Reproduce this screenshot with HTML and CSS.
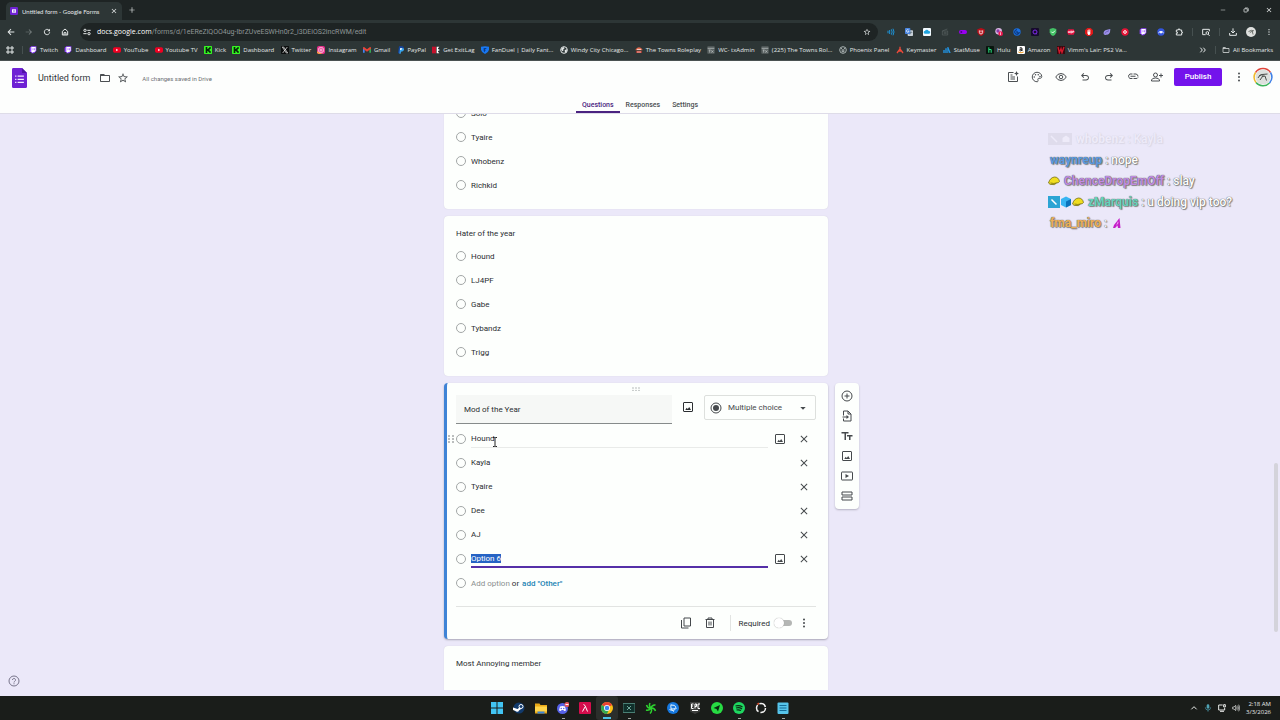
FILE: index.html
```html
<!DOCTYPE html>
<html lang="en">
<head>
  <meta charset="UTF-8" />
  <meta name="viewport" content="width=device-width, initial-scale=1.0"/>
  <title>Untitled form - Google Forms</title>
  <link rel="stylesheet" href="styles.css">
</head>
<body>
  <!-- shared icons -->
  <svg class="defs" width="0" height="0">
    <symbol id="i-image" viewBox="0 0 24 24"><path fill="none" stroke="currentColor" stroke-width="2" d="M4 3h16q1 0 1 1v16q0 1-1 1H4q-1 0-1-1V4q0-1 1-1z"/><path d="M14.500 12l-3 4-2-2.500L6.500 18h11.500z"/></symbol>
    <symbol id="i-close" viewBox="0 0 24 24"><path d="M19 6.400L17.600 5 12 10.600 6.400 5 5 6.400 10.600 12 5 17.600 6.400 19 12 13.400 17.600 19 19 17.600 13.400 12z"/></symbol>
    <symbol id="i-dots" viewBox="0 0 24 24"><circle cx="12" cy="5" r="2"/><circle cx="12" cy="12" r="2"/><circle cx="12" cy="19" r="2"/></symbol>
    <symbol id="i-star" viewBox="0 0 24 24"><path d="M22 9.200l-7.200-.6L12 2 9.200 8.600 2 9.200l5.500 4.700L5.800 21 12 17.300 18.200 21l-1.600-7.100L22 9.200zM12 15.400l-3.800 2.300 1-4.300-3.300-2.900 4.400-.4L12 6.100l1.700 4 4.400.4-3.300 2.900 1 4.300z"/></symbol>
    <symbol id="i-folder" viewBox="0 0 24 24"><path d="M20 6h-8l-2-2H4c-1.100 0-2 .9-2 2v12c0 1.100.9 2 2 2h16c1.100 0 2-.9 2-2V8c0-1.100-.9-2-2-2zm0 12H4V8h16v10z"/></symbol>
    <symbol id="i-undo" viewBox="0 0 24 24"><path d="M7 19v-2h7.100c1.900 0 3.900-1.500 3.900-3.500S16 10 14.100 10H7.800l2.600 2.600L9 14 4 9l5-5 1.400 1.400L7.800 8h6.300c3.200 0 5.900 2.300 5.900 5.500S17.300 19 14.100 19z"/></symbol>
    <symbol id="i-twitch" viewBox="0 0 24 24"><path fill="#9146ff" d="M2 5l5-4h15v14l-7 7H7v-4H2z"/><path fill="#fff" d="M7 3h13v11l-4 4h-4l-3 3v-3H7z"/><path fill="#9146ff" d="M11 7h2v6h-2zM16 7h2v6h-2z"/></symbol>
    <symbol id="i-youtube" viewBox="0 0 24 24"><rect x="0" y="4" width="24" height="16" rx="5" fill="#f00022"/><path fill="#fff" d="M9.500 8.500v7l6-3.500z"/></symbol>
    <symbol id="i-kick" viewBox="0 0 24 24"><rect width="24" height="24" rx="2" fill="#35f522"/><path fill="#07220a" d="M5 3h5v6h3V6h3V3h4v6h-3v6h3v6h-4v-3h-3v-3h-3v6H5z"/></symbol>
    <symbol id="i-tx" viewBox="0 0 24 24"><rect x="1" y="1" width="22" height="22" rx="2" fill="#5a6262"/><path fill="none" stroke="#c3c9c9" stroke-width="2" d="M2 7h20M5 12h6M8 12v8M13 13l6 7M19 13l-6 7"/></symbol>
    <symbol id="i-banana" viewBox="0 0 24 24"><path fill="#f0dd20" stroke="#6b6512" stroke-width="1.500" d="M1 16Q4 5 13 4q8 0 10 9-2 3-6 3-4 5-9 3-4 1-7-3z"/><path fill="none" stroke="#6b6512" stroke-width="1.500" d="M5 16q7 2 12 0"/></symbol>
    <symbol id="i-forms" viewBox="0 0 24 32"><path fill="#6f22d4" d="M2 0h14l8 8v22c0 1-1 2-2 2H2c-1 0-2-1-2-2V2C0 1 1 0 2 0z"/><path fill="#4e12a5" d="M16 0l8 8h-8z"/><path fill="#f3eaff" d="M9 12h10v2H9zM9 17h10v2H9zM9 22h10v2H9zM5 12h2v2H5zM5 17h2v2H5zM5 22h2v2H5z"/></symbol>
  </svg>

  <!-- browser window -->
  <header class="browser">
    <div class="tab-strip">
      <div class="tab">
        <svg class="ico" viewBox="0 0 24 24"><rect width="24" height="24" rx="4" fill="#6f22d4"/><path fill="#fff" d="M6 7h12v10H6z"/><path fill="#a880e6" d="M9 9h7v2H9zM9 13h7v2H9z"/></svg>
        <span class="tab-title">Untitled form - Google Forms</span>
        <button class="icon-btn tab-close" aria-label="Close tab"><svg class="ico"><use href="#i-close"/></svg></button>
      </div>
      <button class="icon-btn new-tab" aria-label="New tab"><svg class="ico" viewBox="0 0 24 24"><path d="M20 13h-7v7h-2v-7H4v-2h7V4h2v7h7z"/></svg></button>
      <div class="window-btns">
        <button class="icon-btn" aria-label="Minimize"><svg class="ico-s" viewBox="0 0 24 24"><path d="M3 11h18v2H3z"/></svg></button>
        <button class="icon-btn" aria-label="Restore"><svg class="ico-s" viewBox="0 0 24 24"><path fill="none" stroke="currentColor" stroke-width="3" d="M4 9a2 2 0 0 1 2-2h9a2 2 0 0 1 2 2v9a2 2 0 0 1-2 2H6a2 2 0 0 1-2-2zM8 4h10a3 3 0 0 1 3 3v10"/></svg></button>
        <button class="icon-btn" aria-label="Close"><svg class="ico" viewBox="0 0 24 24"><use href="#i-close"/></svg></button>
      </div>
    </div>

    <div class="toolbar">
      <button class="icon-btn" aria-label="Back"><svg class="ico" viewBox="0 0 24 24"><path d="M22 10.500H7l6-6L11 2.500 1.500 12l9.500 9.500 2-2-6-6h15z"/></svg></button>
      <button class="icon-btn dim" aria-label="Forward"><svg class="ico" viewBox="0 0 24 24"><path d="M2 11h15l-6-6 1.500-1.500L21 12l-8.500 8.500L11 19l6-6H2z"/></svg></button>
      <button class="icon-btn" aria-label="Reload"><svg class="ico" viewBox="0 0 24 24"><path fill="none" stroke="currentColor" stroke-width="3" d="M20 13a8 8 0 1 1-2.500-6.800"/><path d="M21 2v8h-8z"/></svg></button>
      <button class="icon-btn" aria-label="Home"><svg class="ico" viewBox="0 0 24 24"><path fill="none" stroke="currentColor" stroke-width="3" d="M4 10l8-7 8 7v11H4zM9 21v-7h6v7"/></svg></button>
      <div class="address">
        <svg class="ico" viewBox="0 0 24 24"><path fill="none" stroke="currentColor" stroke-width="3" d="M13 7h10M1 17h10"/><circle cx="6" cy="7" r="3.500" fill="none" stroke="currentColor" stroke-width="3"/><circle cx="18" cy="17" r="3.500" fill="none" stroke="currentColor" stroke-width="3"/></svg>
        <label class="domain" for="url">docs.google.com</label>
        <input class="url" id="url" type="text" value="/forms/d/1eEReZlQOO4ug-IbrZUveESWHn0r2_i3DEiOS2incRWM/edit" />
        <button class="icon-btn" aria-label="Bookmark this tab"><svg class="ico"><use href="#i-star"/></svg></button>
      </div>
      <div class="extensions">
        <svg class="ico" viewBox="0 0 24 24"><g fill="none" stroke="#1c93d8" stroke-width="3"><path d="M3 8v8M8 6v12M13 4q5 8 0 16M18 2q6 10 0 20"/></g></svg>
        <svg class="ico" viewBox="0 0 24 24"><rect x="8" y="7" width="16" height="17" rx="2" fill="#c9d2da"/><rect width="16" height="18" rx="2" fill="#4a86e0"/><path fill="none" stroke="#fff" stroke-width="2" d="M11 6a4 4 0 1 0 1 4H8"/><path fill="none" stroke="#5b6c7a" stroke-width="2" d="M15 13h7M18 11q0 6-4 9"/></svg>
        <svg class="ico" viewBox="0 0 24 24"><rect width="24" height="24" rx="3" fill="#f4fbff"/><path fill="#20a4df" d="M6 17a4 4 0 0 1 0-8 6 6 0 0 1 11 0 4 4 0 0 1 1 8z"/></svg>
        <svg class="ico" viewBox="0 0 24 24"><path fill="none" stroke="#596262" stroke-width="2" d="M4 9h16v12H4zM4 9l15-6M8 13h9M8 17h9"/></svg>
        <svg class="ico" viewBox="0 0 24 24"><rect y="6" width="24" height="12" rx="6" fill="#9a00f0"/><circle cx="7" cy="12" r="3" fill="#4d0087"/></svg>
        <svg class="ico" viewBox="0 0 24 24"><path fill="#b80d18" d="M12 0l11 4v9q-2 8-11 11Q3 21 1 13V4z"/><path fill="none" stroke="#fff" stroke-width="2.500" d="M7 7v6a4 4 0 0 0 10 0V7M12 7v6"/></svg>
        <svg class="ico" viewBox="0 0 24 24"><circle cx="11" cy="10" r="10" fill="#d8b7e2"/><circle cx="9" cy="9" r="5" fill="#8a3da7"/><circle cx="17" cy="17" r="7" fill="#ef174f"/><path fill="#fff" d="M16 13h2v8h-2z"/></svg>
        <svg class="ico" viewBox="0 0 24 24"><circle cx="12" cy="12" r="11" fill="#1a6fe0"/><path fill="none" stroke="#0b2f6b" stroke-width="3" d="M12 5a7 7 0 1 0 7 7M12 9v6h5"/></svg>
        <svg class="ico" viewBox="0 0 24 24"><rect width="24" height="24" rx="3" fill="#160b2b"/><circle cx="12" cy="12" r="6" fill="none" stroke="#7e2be8" stroke-width="3"/><path fill="#7e2be8" d="M14 14l5 5h-4z"/></svg>
        <svg class="ico" viewBox="0 0 24 24"><path fill="#44c267" d="M12 0l10 3v10q-2 8-10 11Q4 21 2 13V3z"/><path fill="none" stroke="#e7ffed" stroke-width="3" d="M7 11l4 4 7-7"/></svg>
        <svg class="ico" viewBox="0 0 24 24"><path fill="#e5103f" d="M4 4h16l4 8-4 8H4l-4-8z"/><path fill="none" stroke="#fff" stroke-width="2" d="M4 15l2-6 2 6M11 9v6M11 9h3v6h-3M17 15V9h3v3h-3"/></svg>
        <svg class="ico" viewBox="0 0 24 24"><path fill="#e01818" d="M7 0h10l7 7v10l-7 7H7l-7-7V7z"/><path fill="#fff" d="M8 6h2v5h1V4h2v7h1V5h2v13l-3 3h-3l-3-5z"/></svg>
        <svg class="ico" viewBox="0 0 24 24"><path fill="#9b8fe8" d="M2 18Q0 7 12 5l10-2-1 10q-3 9-11 7-5 3-8-2z"/><path fill="none" stroke="#55499e" stroke-width="2" d="M5 17q5-7 13-9"/></svg>
        <svg class="ico" viewBox="0 0 24 24"><circle cx="12" cy="12" r="11" fill="#e71336"/><circle cx="12" cy="12" r="4" fill="none" stroke="#fff" stroke-width="3"/></svg>
        <svg class="ico"><use href="#i-twitch"/></svg>
        <svg class="ico" viewBox="0 0 24 24"><circle cx="12" cy="12" r="11" fill="#3355df"/><path fill="#fff" d="M4 17a8 8 0 0 1 16 0l-4-4-4 4-4-4z"/></svg>
        <svg class="ico" viewBox="0 0 24 24"><path fill="none" stroke="currentColor" stroke-width="3" d="M4 6h6V3h4v3h6v6h2v3h-2v6H4v-5h3v-4H4z"/></svg>
      </div>
      <span class="sep"></span>
      <button class="icon-btn" aria-label="Search tabs"><svg class="ico" viewBox="0 0 24 24"><path fill="none" stroke="currentColor" stroke-width="3" d="M11 20H2V4h20v6M18 19l5 4"/><circle cx="16" cy="15" r="4" fill="none" stroke="currentColor" stroke-width="3"/></svg></button>
      <span class="sep"></span>
      <button class="icon-btn" aria-label="Downloads"><svg class="ico" viewBox="0 0 24 24"><path fill="none" stroke="currentColor" stroke-width="3" d="M12 1v14M6 9l6 6 6-6M2 15v7h20v-7"/></svg></button>
      <button class="icon-btn" aria-label="Profile"><svg class="ico-l" viewBox="0 0 24 24"><circle cx="12" cy="12" r="12" fill="#dfe1df"/><path fill="none" stroke="#565a56" stroke-width="2" d="M6 11q7-5 13-2M9 14q3-4 7-3M15 10l2 8"/></svg></button>
      <button class="icon-btn" aria-label="Menu"><svg class="ico"><use href="#i-dots"/></svg></button>
    </div>

    <nav class="bookmarks">
      <svg class="ico" viewBox="0 0 24 24"><path fill="none" stroke="currentColor" stroke-width="3" d="M3 3h6v6H3zM15 3h6v6h-6zM3 15h6v6H3zM15 15h6v6h-6z"/></svg>
      <span class="sep"></span>
      <div class="bookmark-list">
        <a href="#"><svg class="ico"><use href="#i-twitch"/></svg>Twitch</a>
        <a href="#"><svg class="ico"><use href="#i-twitch"/></svg>Dashboard</a>
        <a href="#"><svg class="ico"><use href="#i-youtube"/></svg>YouTube</a>
        <a href="#"><svg class="ico"><use href="#i-youtube"/></svg>Youtube TV</a>
        <a href="#"><svg class="ico"><use href="#i-kick"/></svg>Kick</a>
        <a href="#"><svg class="ico"><use href="#i-kick"/></svg>Dashboard</a>
        <a href="#"><svg class="ico" viewBox="0 0 24 24"><rect width="24" height="24" rx="2" fill="#0b0d0d"/><path fill="none" stroke="#fff" stroke-width="2" d="M4 3h4l12 18h-4zM19 3L5 21"/></svg>Twitter</a>
        <a href="#"><svg class="ico" viewBox="0 0 24 24"><rect width="24" height="24" rx="6" fill="#e8308b"/><path fill="#f9a13c" d="M0 16v3q1 5 6 5h10z"/><rect x="5" y="5" width="14" height="14" rx="4" fill="none" stroke="#fff" stroke-width="2"/><circle cx="12" cy="12" r="3" fill="none" stroke="#fff" stroke-width="2"/></svg>Instagram</a>
        <a href="#"><svg class="ico" viewBox="0 0 24 24"><path fill="#4285f4" d="M0 5h5v15H0z"/><path fill="#34a853" d="M19 5h5v15h-5z"/><path fill="#ea4335" d="M0 4h4l8 6 8-6h4v4l-12 9L0 8z"/></svg>Gmail</a>
        <a href="#"><svg class="ico" viewBox="0 0 24 24"><path fill="#1546a0" d="M6 1h9q7 1 5 8-2 6-10 6l-2 7H3z"/><path fill="#38a5ee" d="M9 7h10q3 1 2 5-2 5-9 5l-1 6H7z"/><path fill="#fff" d="M9 7h7q0 5-7 5z"/></svg>PayPal</a>
        <a href="#"><svg class="ico" viewBox="0 0 24 24"><path fill="#c4122c" d="M0 2h12v20H0z"/><path fill="#fff" d="M14 2h8l-4 5v3h4v4h-4v3l4 5h-8z"/></svg>Get ExitLag</a>
        <a href="#"><svg class="ico" viewBox="0 0 24 24"><path fill="#1878f2" d="M0 2q12-3 24 0v9q-2 9-12 13Q2 20 0 11z"/><path fill="#0a3b8a" d="M8 6h9l-2 3h-3v2h3l-2 3h-1v5l-4-4z"/></svg>FanDuel | Daily Fant...</a>
        <a href="#"><svg class="ico" viewBox="0 0 24 24"><circle cx="12" cy="12" r="10" fill="none" stroke="#e2e6e6" stroke-width="3"/><path fill="#e2e6e6" d="M3 9l7-6 4 4-4 3v4l-3 2zM14 12l7-2-1 7-5 4z"/></svg>Windy City Chicago...</a>
        <a href="#"><svg class="ico" viewBox="0 0 24 24"><path fill="#e06a4e" d="M2 10Q12-3 22 10v3H2z"/><path fill="#fff" d="M6 9h12v2H6z"/><path fill="#c83e34" d="M4 15h16v6H4z"/><path fill="#efe3dc" d="M8 15h2v6H8zM14 15h2v6h-2z"/></svg>The Towns Roleplay</a>
        <a href="#"><svg class="ico"><use href="#i-tx"/></svg>WC- txAdmin</a>
        <a href="#"><svg class="ico"><use href="#i-tx"/></svg>(225) The Towns Rol...</a>
        <a href="#"><svg class="ico" viewBox="0 0 24 24"><circle cx="12" cy="12" r="10" fill="none" stroke="#aab2b2" stroke-width="3"/><path fill="none" stroke="#aab2b2" stroke-width="3" d="M6 6l4 5-1 6h6l-1-6 4-5"/></svg>Phoenix Panel</a>
        <a href="#"><svg class="ico" viewBox="0 0 24 24"><path fill="none" stroke="#ea4a3a" stroke-width="4" d="M12 2v7L3 21M12 9l9 12M7 15h10"/></svg>Keymaster</a>
        <a href="#"><svg class="ico" viewBox="0 0 24 24"><path fill="#2196e8" d="M1 12h4v9H1zM7 7h4v14H7zM13 3h3l7 18h-4l-3-8v8h-3z"/></svg>StatMuse</a>
        <a href="#"><svg class="ico" viewBox="0 0 24 24"><rect width="24" height="24" rx="2" fill="#08150e"/><path fill="#28e57f" d="M7 4h3v5h5l2 2v9h-3v-8h-4v8H7z"/></svg>Hulu</a>
        <a href="#"><svg class="ico" viewBox="0 0 24 24"><rect width="24" height="24" rx="3" fill="#fff"/><path fill="none" stroke="#111" stroke-width="3" d="M8 6q7-3 7 2v7M15 9q-8 0-7 4 3 4 7-1"/><path fill="none" stroke="#f29a1c" stroke-width="3" d="M4 18q8 5 16 0"/></svg>Amazon</a>
        <a href="#"><svg class="ico" viewBox="0 0 24 24"><rect width="24" height="24" fill="#370a10"/><path fill="none" stroke="#d11a2c" stroke-width="4" d="M3 3l4 17 5-12 3 12 6-17"/></svg>Vimm's Lair: PS2 Va...</a>
      </div>
      <button class="icon-btn more" aria-label="More bookmarks"><svg class="ico" viewBox="0 0 24 24"><path fill="none" stroke="currentColor" stroke-width="3" d="M4 5l6 7-6 7M13 5l6 7-6 7"/></svg></button>
      <span class="sep"></span>
      <a class="all-bookmarks" href="#"><svg class="ico"><use href="#i-folder"/></svg>All Bookmarks</a>
    </nav>
  </header>

  <!-- form editor header -->
  <header class="form-header">
    <div class="form-bar">
      <svg class="forms-logo"><use href="#i-forms"/></svg>
      <h1 class="form-name">Untitled form</h1>
      <button class="icon-btn" aria-label="Move to folder"><svg class="ico-m"><use href="#i-folder"/></svg></button>
      <button class="icon-btn" aria-label="Star"><svg class="ico-m"><use href="#i-star"/></svg></button>
      <span class="saved">All changes saved in Drive</span>
      <div class="form-actions">
        <button class="icon-btn" aria-label="Add-ons"><svg class="ico-m" viewBox="0 0 24 24"><path fill="none" stroke="currentColor" stroke-width="2" d="M13 3H3v18h18V11M7 8h4M7 12h9M7 16h9"/><path d="M19 0l1.500 3.500L24 5l-3.500 1.500L19 10l-1.500-3.500L14 5l3.500-1.500z"/></svg></button>
        <button class="icon-btn" aria-label="Customize theme"><svg class="ico-m" viewBox="0 0 24 24"><path fill="none" stroke="currentColor" stroke-width="2" d="M12 2.500a9.500 9.500 0 0 0 0 19c2 0 2.500-1.500 2-3-.8-2 0-4 2-4h2.500c2 0 3-1.500 3-3.500 0-5-4.500-8.500-9.500-8.500z"/><circle cx="6.500" cy="12" r="1.500"/><circle cx="9" cy="7.500" r="1.500"/><circle cx="14.500" cy="7.500" r="1.500"/><circle cx="18" cy="11" r="1.500"/></svg></button>
        <button class="icon-btn" aria-label="Preview"><svg class="ico-m" viewBox="0 0 24 24"><path fill="none" stroke="currentColor" stroke-width="2" d="M1.500 12Q5 5 12 5t10.500 7Q19 19 12 19T1.500 12z"/><circle cx="12" cy="12" r="3.500" fill="none" stroke="currentColor" stroke-width="2"/></svg></button>
        <button class="icon-btn" aria-label="Undo"><svg class="ico-m"><use href="#i-undo"/></svg></button>
        <button class="icon-btn flip" aria-label="Redo"><svg class="ico-m"><use href="#i-undo"/></svg></button>
        <button class="icon-btn" aria-label="Copy responder link"><svg class="ico-m" viewBox="0 0 24 24"><path fill="none" stroke="currentColor" stroke-width="2" d="M11 15H6a5 5 0 0 1 0-9h5M13 6h5a5 5 0 0 1 4 5M7 10.500h10M13 15h5q3 0 4-2"/></svg></button>
        <button class="icon-btn" aria-label="Share"><svg class="ico-m" viewBox="0 0 24 24"><circle cx="9" cy="8" r="4" fill="none" stroke="currentColor" stroke-width="2"/><path fill="none" stroke="currentColor" stroke-width="2" d="M1 20v-2q1-4 8-4t8 4v2zM20 5v8M16 9h8"/></svg></button>
        <button class="publish">Publish</button>
        <button class="icon-btn" aria-label="More"><svg class="ico-m"><use href="#i-dots"/></svg></button>
        <button class="icon-btn" aria-label="Account"><svg class="avatar" viewBox="0 0 40 40"><g fill="none" stroke-width="3"><path stroke="#e0453a" d="M5 11A18 18 0 0 1 35 11"/><path stroke="#3e7fe6" d="M35 11A18 18 0 0 1 33 32"/><path stroke="#3bb45a" d="M33 32A18 18 0 0 1 6 31"/><path stroke="#f0b92a" d="M6 31A18 18 0 0 1 5 11"/></g><circle cx="20" cy="20" r="15" fill="#dde0dd"/><path fill="none" stroke="#4a4d4a" stroke-width="2" d="M10 22q3-7 8-7l11-1M14 26l5-7 5-1 3 9M12 18l6-3M21 15l-3 5"/></svg></button>
      </div>
    </div>
    <nav class="form-tabs">
      <a class="form-tab active" href="#">Questions</a>
      <a class="form-tab" href="#">Responses</a>
      <a class="form-tab" href="#">Settings</a>
    </nav>
  </header>

  <main class="editor">
    <div class="questions">
      <section class="card first">
        <label class="option"><input type="radio" name="q1" />Solo</label>
        <label class="option"><input type="radio" name="q1" />Tyaire</label>
        <label class="option"><input type="radio" name="q1" />Whobenz</label>
        <label class="option"><input type="radio" name="q1" />Richkid</label>
      </section>

      <section class="card">
        <h2 class="question">Hater of the year</h2>
        <label class="option"><input type="radio" name="q2" />Hound</label>
        <label class="option"><input type="radio" name="q2" />LJ4PF</label>
        <label class="option"><input type="radio" name="q2" />Gabe</label>
        <label class="option"><input type="radio" name="q2" />Tybandz</label>
        <label class="option"><input type="radio" name="q2" />Trigg</label>
      </section>

      <section class="card active">
        <div class="drag"><svg class="ico" viewBox="0 0 24 24"><g fill="#9aa0a0"><circle cx="3" cy="9" r="2"/><circle cx="12" cy="9" r="2"/><circle cx="21" cy="9" r="2"/><circle cx="3" cy="16" r="2"/><circle cx="12" cy="16" r="2"/><circle cx="21" cy="16" r="2"/></g></svg></div>
        <div class="question-row">
          <input class="question-input" type="text" aria-label="Question" value="Mod of the Year" />
          <button class="icon-btn" aria-label="Add image"><svg class="ico-m"><use href="#i-image"/></svg></button>
          <div class="type-box">
            <svg class="ico-m" viewBox="0 0 24 24"><circle cx="12" cy="12" r="10" fill="none" stroke="currentColor" stroke-width="2"/><circle cx="12" cy="12" r="6"/></svg>
            <select class="type-select" aria-label="Question type">
              <option>Multiple choice</option>
              <option>Checkboxes</option>
              <option>Dropdown</option>
            </select>
            <svg class="ico" viewBox="0 0 24 24"><path d="M4 9h16l-8 8z"/></svg>
          </div>
        </div>

        <div class="edit-option hovered">
          <svg class="row-drag" viewBox="0 0 6 10"><g fill="#a4a8a8"><circle cx="1" cy="2" r="1"/><circle cx="5" cy="2" r="1"/><circle cx="1" cy="5" r="1"/><circle cx="5" cy="5" r="1"/><circle cx="1" cy="8" r="1"/><circle cx="5" cy="8" r="1"/></g></svg>
          <input type="radio" aria-label="Option 1" />
          <input class="option-text" type="text" aria-label="Option 1 text" value="Hound" />
          <button class="icon-btn" aria-label="Add image"><svg class="ico-m"><use href="#i-image"/></svg></button>
          <button class="icon-btn" aria-label="Remove option"><svg class="ico-m"><use href="#i-close"/></svg></button>
          <svg class="cursor" viewBox="0 0 6 10"><path fill="none" stroke="#222" d="M1 .5h1.500l.5.5.5-.5H5M3 1v8M1 9.500h1.500L3 9l.5.500H5"/></svg>
        </div>
        <div class="edit-option">
          <input type="radio" aria-label="Option 2" />
          <input class="option-text" type="text" aria-label="Option 2 text" value="Kayla" />
          <button class="icon-btn" aria-label="Remove option"><svg class="ico-m"><use href="#i-close"/></svg></button>
        </div>
        <div class="edit-option">
          <input type="radio" aria-label="Option 3" />
          <input class="option-text" type="text" aria-label="Option 3 text" value="Tyaire" />
          <button class="icon-btn" aria-label="Remove option"><svg class="ico-m"><use href="#i-close"/></svg></button>
        </div>
        <div class="edit-option">
          <input type="radio" aria-label="Option 4" />
          <input class="option-text" type="text" aria-label="Option 4 text" value="Dee" />
          <button class="icon-btn" aria-label="Remove option"><svg class="ico-m"><use href="#i-close"/></svg></button>
        </div>
        <div class="edit-option">
          <input type="radio" aria-label="Option 5" />
          <input class="option-text" type="text" aria-label="Option 5 text" value="AJ" />
          <button class="icon-btn" aria-label="Remove option"><svg class="ico-m"><use href="#i-close"/></svg></button>
        </div>
        <div class="edit-option focused">
          <input type="radio" aria-label="Option 6" />
          <input class="option-text" id="newOption" type="text" aria-label="Option 6 text" value="Option 6" />
          <button class="icon-btn" aria-label="Add image"><svg class="ico-m"><use href="#i-image"/></svg></button>
          <button class="icon-btn" aria-label="Remove option"><svg class="ico-m"><use href="#i-close"/></svg></button>
        </div>
        <div class="edit-option">
          <input type="radio" aria-label="New option" />
          <button class="add-option">Add option</button>
          <span class="or">or</span>
          <button class="add-other">add "Other"</button>
        </div>

        <div class="card-footer">
          <button class="icon-btn" aria-label="Duplicate"><svg class="ico-m" viewBox="0 0 24 24"><path fill="none" stroke="currentColor" stroke-width="2" d="M8 2h13v16H8zM3 6v16h14"/></svg></button>
          <button class="icon-btn" aria-label="Delete"><svg class="ico-m" viewBox="0 0 24 24"><path fill="none" stroke="currentColor" stroke-width="2" d="M3 5h18M8 4V2h8v2M5 5v16h14V5M10 9v8M14 9v8"/></svg></button>
          <span class="rule"></span>
          <label for="required">Required</label>
          <input class="switch" id="required" type="checkbox" />
          <button class="icon-btn" aria-label="More options"><svg class="ico-m"><use href="#i-dots"/></svg></button>
        </div>
      </section>

      <aside class="side-tools">
        <button class="icon-btn" aria-label="Add question"><svg class="ico-m" viewBox="0 0 24 24"><circle cx="12" cy="12" r="10" fill="none" stroke="currentColor" stroke-width="2"/><path d="M11 7h2v4h4v2h-4v4h-2v-4H7v-2h4z"/></svg></button>
        <button class="icon-btn" aria-label="Import questions"><svg class="ico-m" viewBox="0 0 24 24"><path fill="none" stroke="currentColor" stroke-width="2" d="M5 11V2h9l6 6v14H5v-5M14 2v6h6"/><path d="M3 13h8v-3l5 4-5 4v-3H3z"/></svg></button>
        <button class="icon-btn" aria-label="Add title and description"><svg class="ico-m" viewBox="0 0 24 24"><path d="M1 4h14v3h-5v13H7V7H1zM12 10h11v3h-4v7h-3v-7h-4z"/></svg></button>
        <button class="icon-btn" aria-label="Add image"><svg class="ico-m"><use href="#i-image"/></svg></button>
        <button class="icon-btn" aria-label="Add video"><svg class="ico-m" viewBox="0 0 24 24"><rect x="1" y="4" width="22" height="16" rx="1" fill="none" stroke="currentColor" stroke-width="2"/><path d="M9 8v8l7-4z"/></svg></button>
        <button class="icon-btn" aria-label="Add section"><svg class="ico-m" viewBox="0 0 24 24"><path fill="none" stroke="currentColor" stroke-width="2" d="M2 4h20v6H2zM2 14h20v6H2z"/></svg></button>
      </aside>

      <section class="card last">
        <h2 class="question">Most Annoying member</h2>
      </section>
    </div>

    <button class="icon-btn help" aria-label="Help"><svg class="ico-m" viewBox="0 0 24 24"><circle cx="12" cy="12" r="10" fill="none" stroke="currentColor" stroke-width="2"/><path fill="none" stroke="currentColor" stroke-width="2" d="M9 10a3 3 0 1 1 4.500 2.500Q12 13.500 12 15M12 16.500v2"/></svg></button>
    <div class="scroll-thumb"></div>

    <!-- stream chat overlay -->
    <div class="chat">
      <p class="faded"><svg class="badge" viewBox="0 0 24 24"><rect width="24" height="24" fill="#9f9ba8"/><path stroke="#fff" stroke-width="3" d="M6 6l12 12"/></svg><svg class="badge" viewBox="0 0 24 24"><rect width="24" height="24" fill="#9f9ba8"/><path fill="#fff" d="M12 5l7 5v8H5v-8z"/></svg><b>whobenz</b><span>: Kayla</span></p>
      <p><b class="blue">waynreup</b><span>: nope</span></p>
      <p><svg class="badge"><use href="#i-banana"/></svg><b class="purple">ChenceDropEmOff</b><span>: slay</span></p>
      <p><svg class="badge" viewBox="0 0 24 24"><rect width="24" height="24" fill="#2ba4d4"/><path stroke="#fff" stroke-width="3" d="M7 7l10 10"/></svg><svg class="badge" viewBox="0 0 24 24"><path fill="#37b4f2" d="M12 1l10 5v12l-10 5-10-5V6z"/><path fill="#0c72bb" d="M12 11l10-5v12l-10 5z"/></svg><svg class="badge"><use href="#i-banana"/></svg><b class="green">zMarquis</b><span>: u doing vip too?</span></p>
      <p><b class="orange">fma_miro</b><span>:</span><svg class="badge" viewBox="0 0 24 24"><path fill="#c420c9" d="M17 2l2 20h-5l-1-5-5 5H4l2-6z"/><path fill="#f29bf0" d="M14 8l1 4-5 6z"/></svg></p>
    </div>
  </main>

  <!-- taskbar -->
  <footer class="taskbar">
    <div class="apps">
      <button class="app" aria-label="Start"><svg viewBox="0 0 24 24"><path fill="#42c4f3" d="M0 0h11v11H0zM13 0h11v11H13zM0 13h11v11H0zM13 13h11v11H13z"/></svg></button>
      <button class="app" aria-label="Steam"><svg viewBox="0 0 24 24"><circle cx="12" cy="12" r="11" fill="#123a6b"/><circle cx="16" cy="9" r="4" fill="none" stroke="#fff" stroke-width="2"/><path fill="#fff" d="M0 11l9 3 4-3 3 3-4 3a4 4 0 0 1-7 1l-5-2z"/></svg></button>
      <button class="app" aria-label="File Explorer"><svg viewBox="0 0 24 24"><path fill="#e9a917" d="M0 3h9l2 3h13v17H0z"/><path fill="#ffd54a" d="M0 9h24v10H0z"/><path fill="#3d86d8" d="M5 19h14v4H5z"/></svg></button>
      <button class="app open" aria-label="Discord"><svg viewBox="0 0 24 24"><circle cx="11" cy="13" r="11" fill="#5662e8"/><path fill="#fff" d="M6 9q5-2 10 0l2 8-4 1-1-2H9l-1 2-4-1z"/><circle cx="8.500" cy="13" r="1.500" fill="#5662e8"/><circle cx="13.500" cy="13" r="1.500" fill="#5662e8"/><circle cx="20" cy="5" r="5" fill="#e7565b"/><path fill="#fff" d="M17 4h6v2h-6z"/></svg></button>
      <button class="app" aria-label="Recorder"><svg viewBox="0 0 24 24"><rect width="24" height="24" rx="2" fill="#d40d4c"/><path fill="none" stroke="#fff" stroke-width="2" d="M9 5l3 2 5 12M12 10L7 19"/></svg></button>
      <button class="app current" aria-label="Google Chrome"><svg viewBox="0 0 24 24"><circle cx="12" cy="12" r="12" fill="#fbc116"/><path fill="#ea4335" d="M12 12L1.600 6a12 12 0 0 1 20.800 0z"/><path fill="#34a853" d="M12 12L1.600 6A12 12 0 0 0 12 24l4-9z"/><circle cx="12" cy="12" r="6" fill="#fff"/><circle cx="12" cy="12" r="4.500" fill="#4285f4"/></svg></button>
      <button class="app open" aria-label="Xbox overlay"><svg viewBox="0 0 24 24"><rect x="0" y="3" width="24" height="18" fill="#10302b" stroke="#4a7f74" stroke-width="2"/><path stroke="#6fa699" stroke-width="2" d="M8 8l8 8M16 8l-8 8"/></svg></button>
      <button class="app" aria-label="Razer"><svg viewBox="0 0 24 24"><path fill="none" stroke="#2dd12f" stroke-width="3" d="M12 12q-5-4-2-10M12 12q2-7 9-6M12 12q7-1 9 6M12 12q3 6-2 11M12 12q-4 6-10 4M12 12Q5 13 3 6"/></svg></button>
      <button class="app" aria-label="Battle.net"><svg viewBox="0 0 24 24"><circle cx="12" cy="12" r="12" fill="#1678df"/><path fill="none" stroke="#e4f4ff" stroke-width="2" d="M5 15q8 5 14-3M8 5q-2 10 6 14M8 6q9-1 10 5-2 4-11 3"/></svg></button>
      <button class="app" aria-label="Epic Games"><svg viewBox="0 0 24 24"><path fill="#3b3d3b" d="M2 0h20v19l-10 5-10-5z"/><path fill="none" stroke="#fff" stroke-width="2" d="M9 4H5v9h4M5 8h3M12 13V4h3v5h-3M22 4h-4v9h4M6 17h12"/></svg></button>
      <button class="app" aria-label="Maps"><svg viewBox="0 0 24 24"><circle cx="12" cy="12" r="12" fill="#27dc43"/><path fill="#07290f" d="M5 12l13-6-4 13-3-5z"/></svg></button>
      <button class="app open" aria-label="Spotify"><svg viewBox="0 0 24 24"><circle cx="12" cy="12" r="12" fill="#1ed760"/><path fill="none" stroke="#0b2a14" stroke-width="2.500" d="M5 8q8-2 14 2M6 12q7-2 12 2M7 16q5-1 9 1"/></svg></button>
      <button class="app" aria-label="Capture"><svg viewBox="0 0 24 24"><circle cx="12" cy="12" r="9" fill="none" stroke="#f2f2f2" stroke-width="3" stroke-dasharray="15 4"/><path fill="#e04b2a" d="M3 4l5-3v5z"/></svg></button>
      <button class="app open" aria-label="Notepad"><svg viewBox="0 0 24 24"><rect x="1" y="1" width="22" height="23" rx="2" fill="#56c4ea"/><path stroke="#146d99" stroke-width="2" d="M5 7h14M5 12h14M5 17h14"/></svg></button>
    </div>
    <div class="tray">
      <svg class="ico" viewBox="0 0 24 24"><path fill="none" stroke="currentColor" stroke-width="3" d="M4 16l8-8 8 8"/></svg>
      <svg class="ico mic" viewBox="0 0 24 24"><rect x="8" y="1" width="8" height="13" rx="4"/><path fill="none" stroke="currentColor" stroke-width="2" d="M4 10q0 8 8 8t8-8M12 18v5"/></svg>
      <svg class="ico" viewBox="0 0 24 24"><path fill="none" stroke="currentColor" stroke-width="3" d="M14 3H2v15h18v-6M6 22h12M17 2h5v7h-5z"/></svg>
      <svg class="ico" viewBox="0 0 24 24"><path fill="none" stroke="currentColor" stroke-width="2" d="M2 9h4l5-5v16l-5-5H2zM14 8q3 4 0 8M17 5q5 7 0 14M20 2q7 10 0 20"/></svg>
      <div class="clock"><span>2:18 AM</span><span>3/3/2026</span></div>
    </div>
  </footer>

  <script>
    // keep the newest option ready to be typed over
    const newOption = document.getElementById('newOption');
    newOption.focus();
    newOption.select();
  </script>
</body>
</html>
```
FILE: styles.css
```css
* {
  box-sizing: border-box;
}

body {
  margin: 0;
  height: 100vh;
  display: flex;
  flex-direction: column;
  overflow: hidden;
  font-family: Roboto, "Liberation Sans", sans-serif;
  font-size: 8px;
  color: #2b2e31;
  background: #ebe8f9;
}

svg {
  display: block;
  flex: none;
  fill: currentColor;
}

.defs {
  position: absolute;
}

.ico {
  width: 8px;
  height: 8px;
}

.ico-s {
  width: 6px;
  height: 6px;
}

.ico-m {
  width: 12px;
  height: 12px;
}

.ico-l {
  width: 10px;
  height: 10px;
}

button,
input,
select {
  font: inherit;
  color: inherit;
  margin: 0;
  padding: 0;
  border: none;
  background: none;
  outline: none;
}

a {
  color: inherit;
  text-decoration: none;
}

.icon-btn {
  flex: none;
  display: flex;
  align-items: center;
  justify-content: center;
}

/* browser */
.browser {
  flex: none;
  font-family: "Open Sans", "Noto Sans", sans-serif;
  font-size: 6px;
  color: #e4e8e8;
  background: #2d3636;
  border-bottom: 1px solid #4a5252;
}

.tab-strip {
  display: flex;
  align-items: center;
  height: 20px;
  padding-left: 6px;
  background: #1e2424;
}

.tab {
  display: flex;
  align-items: center;
  align-self: flex-end;
  width: 116px;
  height: 18px;
  padding: 0 4px;
  border-radius: 5px 5px 0 0;
  background: #2d3636;
}

.tab-title {
  flex: 1;
  margin-left: 4px;
  font-family: Lato, sans-serif;
  white-space: nowrap;
}

.new-tab {
  margin-left: 6px;
}

.window-btns {
  display: flex;
  margin-left: auto;
}

.window-btns .icon-btn {
  width: 23px;
}

.toolbar {
  display: flex;
  align-items: center;
  height: 23px;
  padding: 0 2px;
}

.toolbar .icon-btn {
  width: 18px;
  height: 18px;
}

.toolbar .dim {
  color: #7d8585;
}

.address {
  flex: 1;
  display: flex;
  align-items: center;
  height: 18px;
  margin: 0 4px 0 6px;
  padding: 0 2px 0 3px;
  border-radius: 9px;
  background: #1e2424;
  font-size: 7px;
}

.domain {
  margin-left: 6px;
  color: #fff;
}

.url {
  flex: 1;
  font-family: Roboto, sans-serif;
  color: #8e9696;
}

.extensions {
  display: flex;
  gap: 10px;
  padding: 0 5px;
}

.sep {
  width: 1px;
  height: 8px;
  margin: 0 4px;
  background: #465050;
}

.bookmarks {
  display: flex;
  align-items: center;
  height: 17px;
  padding: 0 7px 3px 6px;
}

.bookmarks .sep {
  margin: 0 6px 0 8px;
}

.bookmark-list {
  flex: 1;
  display: flex;
  justify-content: space-between;
  margin-right: 72px;
}

.bookmark-list a,
.all-bookmarks {
  display: flex;
  align-items: center;
  gap: 3px;
  white-space: nowrap;
}

/* form header */
.form-header {
  flex: none;
  color: #4b4f52;
  background: #fdfefd;
  border-bottom: 1px solid #dedce8;
}

.form-bar {
  display: flex;
  align-items: center;
  height: 34px;
  padding: 0 5px 0 12px;
}

.forms-logo {
  width: 15px;
  height: 20px;
}

.form-name {
  margin: 0 6px 0 11px;
  font-size: 9px;
  font-weight: 400;
  color: #33373a;
}

.form-bar > .icon-btn {
  width: 18px;
}

.saved {
  margin-left: 10px;
  font-size: 6px;
  color: #6c7073;
}

.form-actions {
  display: flex;
  align-items: center;
  align-self: flex-start;
  height: 31px;
  margin-left: auto;
}

.form-actions .icon-btn {
  width: 24px;
}

.form-actions .flip svg {
  transform: scaleX(-1);
}

.publish {
  width: 48px;
  height: 18px;
  margin: 0 5px;
  border-radius: 2px;
  background: #7313ec;
  color: #fff;
  font-weight: 500;
}

.avatar {
  width: 20px;
  height: 20px;
}

.form-tabs {
  display: flex;
  justify-content: center;
  height: 18px;
}

.form-tab {
  padding: 0 6px;
  border-bottom: 2px solid transparent;
  font-size: 7px;
  font-weight: 500;
  line-height: 20px;
}

.form-tab.active {
  color: #4a2380;
  border-color: #4a2380;
}

/* editor */
.editor {
  position: relative;
  flex: 1;
  min-height: 0;
  padding: 0 8px 6px 0;
}

.questions {
  display: grid;
  grid-template-columns: 1fr 384px 1fr;
  row-gap: 7px;
  height: 100%;
  overflow: hidden;
  align-content: start;
}

.card {
  grid-column: 2;
  padding: 12px;
  border-radius: 4px;
  background: #fdfffd;
  box-shadow: 0 0 1px #c9c6d6;
}

.card.first {
  margin-top: -13px;
  padding-top: 0;
}

.card.last {
  height: 80px;
}

.question {
  margin: 0 0 4px;
  font-size: 8px;
  font-weight: 400;
  line-height: 12px;
}

.option,
.edit-option {
  display: flex;
  align-items: center;
  height: 24px;
}

input[type="radio"] {
  appearance: none;
  flex: none;
  width: 10px;
  height: 10px;
  margin-right: 5px;
  border: 1px solid #a3a7a7;
  border-radius: 50%;
}

.card.active {
  padding: 0 12px 0 9px;
  border-left: 3px solid #3f83d6;
  box-shadow: 0 1px 2px #a9a6b6;
}

.drag {
  display: flex;
  align-items: center;
  justify-content: center;
  height: 12px;
}

.question-row {
  display: flex;
  align-items: flex-start;
  height: 32px;
}

.question-row > .icon-btn {
  width: 32px;
  height: 24px;
}

.question-input {
  flex: 1;
  min-width: 0;
  height: 29px;
  padding: 0 8px;
  border-bottom: 1px solid #868b8b;
  background: #f6f8f6;
}

.type-box {
  display: flex;
  align-items: center;
  width: 112px;
  height: 25px;
  padding: 0 8px 0 5px;
  border: 1px solid #dde0dd;
  border-radius: 2px;
  color: #45494c;
}

.type-select {
  appearance: none;
  flex: 1;
  margin-left: 6px;
}

.edit-option {
  position: relative;
}

.edit-option .icon-btn {
  width: 24px;
  color: #45494c;
}

.option-text {
  flex: 1;
  min-width: 0;
  height: 17px;
  border-bottom: 1px solid transparent;
}

.hovered .option-text {
  border-color: #e9ebe9;
}

.focused .option-text {
  border-bottom: 2px solid #5530a8;
}

.option-text::selection {
  background: #2563c4;
  color: #fff;
}

.row-drag {
  position: absolute;
  left: -8px;
  width: 6px;
  height: 10px;
}

.cursor {
  position: absolute;
  left: 36px;
  top: 10px;
  width: 6px;
  height: 10px;
}

.add-option {
  color: #8b8f8f;
}

.or {
  margin: 0 3px 0 2px;
}

.add-other {
  font-weight: 500;
  color: #2384b4;
}

.card-footer {
  display: flex;
  align-items: center;
  justify-content: flex-end;
  height: 33px;
  margin-top: 11px;
  border-top: 1px solid #e2e4e2;
}

.card-footer .icon-btn {
  width: 24px;
  color: #45494c;
}

.rule {
  width: 1px;
  height: 16px;
  margin: 0 8px;
  background: #e2e4e2;
}

.switch {
  appearance: none;
  position: relative;
  width: 16px;
  height: 6px;
  margin: 0 0 0 6px;
  border-radius: 3px;
  background: #b4b6b4;
}

.switch::before {
  content: "";
  position: absolute;
  left: -2px;
  top: -2px;
  width: 10px;
  height: 10px;
  border-radius: 50%;
  background: #fff;
  box-shadow: 0 0 1px #8d8f8d;
}

.side-tools {
  grid-column: 3;
  grid-row: 3;
  align-self: start;
  width: 24px;
  margin-left: 7px;
  padding: 3px 0;
  border-radius: 4px;
  background: #fdfffd;
  box-shadow: 0 1px 2px #b4b1c2;
  color: #45494c;
}

.side-tools .icon-btn {
  width: 24px;
  height: 20px;
}

.help {
  position: absolute;
  left: 8px;
  bottom: 9px;
  color: #77748a;
}

.scroll-thumb {
  position: absolute;
  right: 2px;
  top: 60%;
  width: 4px;
  height: 29%;
  border-radius: 2px;
  background: #d4d3db;
}

/* chat */
.chat {
  position: absolute;
  top: 14px;
  right: 0;
  width: 232px;
  font-family: Roboto, sans-serif;
  font-size: 12px;
  font-weight: 500;
  color: #fff;
  text-shadow: 0 0 1px #666, 0 0 1px #666, 1px 1px 1px #888;
}

.chat p {
  display: flex;
  align-items: center;
  height: 21px;
  margin: 0;
}

.chat b {
  margin: 0 3px 0 2px;
  font-weight: 700;
}

.chat .faded {
  opacity: 0.15;
}

.badge {
  width: 12px;
  height: 12px;
}

.badge + b {
  margin-left: 4px;
}

span + .badge {
  margin-left: 4px;
}

.blue {
  color: #5b9be0;
}

.purple {
  color: #c08be0;
}

.green {
  color: #67d3bd;
}

.orange {
  color: #eeb057;
}

/* taskbar */
.taskbar {
  flex: none;
  display: grid;
  grid-template-columns: 1fr auto 1fr;
  height: 24px;
  background: #1a1d1a;
  color: #e8eae8;
}

.apps {
  grid-column: 2;
  display: flex;
}

.app {
  position: relative;
  display: flex;
  align-items: center;
  justify-content: center;
  width: 22px;
  height: 24px;
}

.app svg {
  width: 12px;
  height: 12px;
}

.app.current {
  border-radius: 3px;
  background: #2b2e2b;
}

.app.open::after,
.app.current::after {
  content: "";
  position: absolute;
  bottom: 1px;
  width: 3px;
  height: 1px;
  background: #a5a8a5;
}

.app.current::after {
  width: 8px;
  height: 2px;
  background: #4cc2e8;
}

.tray {
  display: flex;
  align-items: center;
  justify-content: flex-end;
  gap: 6px;
  padding-right: 9px;
}

.mic {
  color: #4fa3b5;
}

.clock {
  display: flex;
  flex-direction: column;
  align-items: flex-end;
  font-family: "Open Sans", "Noto Sans", sans-serif;
  font-size: 6px;
  line-height: 8px;
}
```
